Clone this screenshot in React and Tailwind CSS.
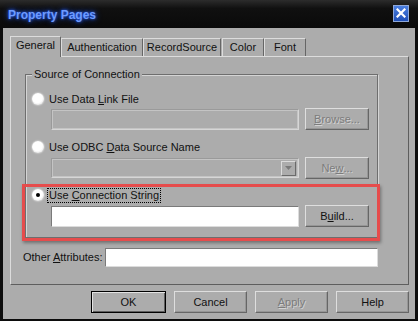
import React from "react";

const F = "[font-family:'Liberation_Sans',Arial,sans-serif]";

function Radio({ checked }) {
  return (
    <span className="w-[12px] h-[12px] rounded-full shrink-0 flex items-center justify-center bg-[radial-gradient(circle_at_45%_40%,#ffffff_50%,#ececec_70%,#a0a0a0_100%)] shadow-[0_0_2px_#ffffff]">
      {checked ? <span className="w-[4px] h-[4px] rounded-full bg-black" /> : null}
    </span>
  );
}

function Btn({ children, disabled, def, w }) {
  const base =
    "h-[22px] flex items-center justify-center text-[11px] bg-[#acacac] " + F;
  if (def) {
    return (
      <div className={base + " border border-black shadow-[inset_1px_1px_0_#e2e2e2,inset_-1px_-1px_0_#5e5e5e] text-[#111]"} style={{ width: w }}>
        {children}
      </div>
    );
  }
  return (
    <div
      className={
        base +
        " border border-t-[#dedede] border-l-[#dedede] border-r-[#666666] border-b-[#666666] shadow-[inset_-1px_-1px_0_#969696] " +
        (disabled ? "text-[#7c7c7c] [text-shadow:1px_1px_0_#d2d2d2]" : "text-[#111]")
      }
      style={{ width: w }}
    >
      {children}
    </div>
  );
}

function DisabledField({ children }) {
  return (
    <div className="w-[248px] h-[21px] bg-[#acacac] border border-t-[#9a9a9a] border-l-[#9a9a9a] border-r-[#d6d6d6] border-b-[#d6d6d6] shadow-[inset_0_0_0_1px_#c4c4c4] relative">
      {children}
    </div>
  );
}

export default function App() {
  return (
    <div className={"w-[418px] h-[321px] bg-[#0c0c0c] flex flex-col overflow-hidden " + F}>
      {/* title bar */}
      <div className="h-[28px] shrink-0 flex items-center justify-between pl-[8px] pr-[9px] bg-[linear-gradient(#2c2c2c,#101010_30%,#0a0a0a)]">
        <span className="text-[12px] font-bold text-[#6d9bff] [text-shadow:0_0_3px_#2a63ff,0_0_6px_#1f4fd6] mt-[2px]">
          Property Pages
        </span>
        <div className="w-[16px] h-[17px] mt-[-2px] border border-[#8fa8d8] bg-[linear-gradient(#4a7fe0,#1f4fb8)] flex items-center justify-center">
          <svg width="10" height="10" viewBox="0 0 10 10">
            <path d="M1.5 1.5 L8.5 8.5 M8.5 1.5 L1.5 8.5" stroke="#ffffff" strokeWidth="2.2" strokeLinecap="square" />
          </svg>
        </div>
      </div>

      {/* body */}
      <div className="mx-[3px] w-[412px] bg-[#acacac] pt-[8px] pl-[7px] pr-[6px] pb-[6px] text-[11px] text-[#111]">
        {/* tabs */}
        <div className="flex items-end h-[20px] relative z-10">
          <div className="w-[51px] h-[21px] bg-[#acacac] border-t border-l border-r border-t-[#dcdcdc] border-l-[#dcdcdc] border-r-[#666666] flex items-center justify-center pb-[3px] mb-[-1px]">
            General
          </div>
          <div className="w-[82px] h-[18px] border-t border-l border-r border-t-[#dcdcdc] border-l-[#dcdcdc] border-r-[#666666] flex items-center justify-center">
            Authentication
          </div>
          <div className="w-[78px] h-[18px] border-t border-l border-r border-t-[#dcdcdc] border-l-[#dcdcdc] border-r-[#666666] flex items-center justify-center">
            RecordSource
          </div>
          <div className="w-[42px] h-[18px] ml-[1px] border-t border-l border-r border-t-[#dcdcdc] border-l-[#dcdcdc] border-r-[#666666] flex items-center justify-center">
            Color
          </div>
          <div className="w-[42px] h-[18px] border-t border-l border-r border-t-[#dcdcdc] border-l-[#dcdcdc] border-r-[#666666] flex items-center justify-center">
            Font
          </div>
        </div>

        {/* panel */}
        <div className="border border-t-[#dcdcdc] border-l-[#dcdcdc] border-r-[#5e5e5e] border-b-[#5e5e5e] pt-[17px] pl-[12px] pr-[30px] pb-[17px]">
          {/* group box */}
          <div className="relative ml-[2px] border border-[#6e6e6e] shadow-[1px_1px_0_#d4d4d4,inset_1px_1px_0_#d4d4d4] pt-[17px] pl-[6px] pr-[7px] pb-[10px]">
            <span className="absolute left-[6px] top-[-8px] px-[2px] bg-[#acacac] leading-[14px]">
              Source of Connection
            </span>

            <div className="flex items-center h-[14px]">
              <Radio />
              <span className="ml-[5px]">
                Use Data <span className="underline">L</span>ink File
              </span>
            </div>
            <div className="flex items-center gap-[6px] mt-[2px] ml-[19px]">
              <DisabledField />
              <Btn w={64} disabled>
                <span className="underline">B</span>rowse...
              </Btn>
            </div>

            <div className="flex items-center h-[14px] mt-[10px]">
              <Radio />
              <span className="ml-[5px]">
                Use ODBC <span className="underline">D</span>ata Source Name
              </span>
            </div>
            <div className="flex items-center gap-[6px] mt-[3px] ml-[19px]">
              <div className="w-[248px] h-[20px] bg-[#acacac] border border-t-[#9a9a9a] border-l-[#9a9a9a] border-r-[#d6d6d6] border-b-[#d6d6d6] shadow-[inset_0_0_0_1px_#c4c4c4] flex justify-end items-center pr-[2px]">
                <div className="w-[15px] h-[15px] border border-t-[#dcdcdc] border-l-[#dcdcdc] border-r-[#6a6a6a] border-b-[#6a6a6a] flex items-center justify-center">
                  <svg width="7" height="4" viewBox="0 0 7 4">
                    <path d="M0 0 L7 0 L3.5 4 Z" fill="#7a7a7a" />
                  </svg>
                </div>
              </div>
              <Btn w={64} disabled>
                Ne<span className="underline">w</span>...
              </Btn>
            </div>

            <div className="flex items-center h-[14px] mt-[9px]">
              <Radio checked />
              <span className="ml-[4px] px-[1px] [outline:1px_dotted_#000] leading-[13px]">
                Use <span className="underline">C</span>onnection String
              </span>
            </div>
            <div className="flex items-center gap-[6px] mt-[3px] ml-[19px]">
              <div className="w-[248px] h-[21px] bg-white border border-t-[#7a7a7a] border-l-[#7a7a7a] border-r-[#dcdcdc] border-b-[#dcdcdc]" />
              <Btn w={64}>
                B<span className="underline">u</span>ild...
              </Btn>
            </div>

            {/* red highlight annotation */}
            <div className="absolute left-[-4px] right-[-3px] top-[109px] h-[57px] border-[3px] border-[#e64c4c] shadow-[1px_2px_3px_rgba(0,0,0,0.35)] pointer-events-none" />
          </div>

          {/* other attributes */}
          <div className="flex items-center mt-[10px] h-[19px]">
            <span className="w-[82px] shrink-0">
              Other <span className="underline">A</span>ttributes:
            </span>
            <div className="flex-1 h-[19px] bg-white border border-t-[#7a7a7a] border-l-[#7a7a7a] border-r-[#dcdcdc] border-b-[#dcdcdc]" />
          </div>
        </div>

        {/* buttons */}
        <div className="flex justify-end gap-[8px] mt-[6px]">
          <Btn w={75} def>OK</Btn>
          <Btn w={73}>Cancel</Btn>
          <Btn w={73} disabled>
            <span className="underline">A</span>pply
          </Btn>
          <Btn w={73}>Help</Btn>
        </div>
      </div>
    </div>
  );
}
